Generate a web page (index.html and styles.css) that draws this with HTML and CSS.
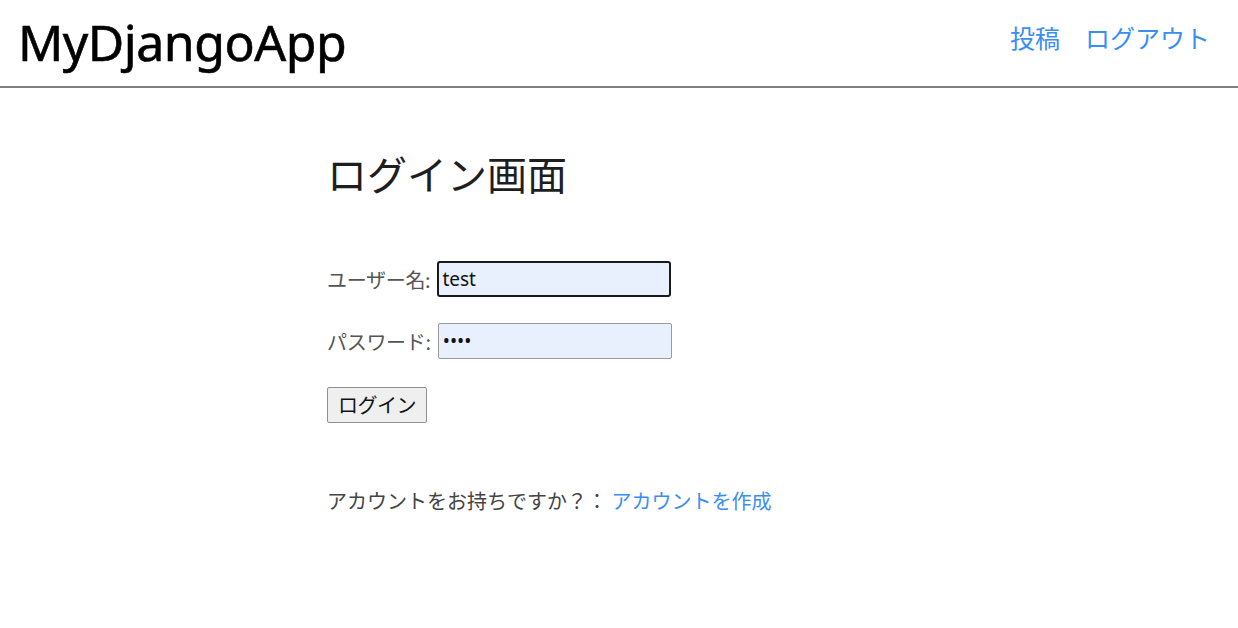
FILE: index.html
```html
<!DOCTYPE html>
<html lang="ja">
<head>
<meta charset="utf-8">
<title>MyDjangoApp</title>
<link rel="stylesheet" href="styles.css">
</head>
<body>
<header class="site-header">
  <a class="brand" href="#">MyDjangoApp</a>
  <nav class="nav">
    <a href="#">投稿</a>
    <a href="#">ログアウト</a>
  </nav>
</header>
<main class="container">
  <h1 class="page-title">ログイン画面</h1>
  <form class="login-form">
    <p class="field"><label for="u">ユーザー名:</label> <input id="u" class="input focused" type="text" value="test"></p>
    <p class="field"><label for="p">パスワード:</label> <input id="p" class="input" type="password" value="test"></p>
    <p class="field"><button type="button" class="btn">ログイン</button></p>
  </form>
  <p class="signup">アカウントをお持ちですか？： <a href="#">アカウントを作成</a></p>
</main>
</body>
</html>
```

FILE: styles.css
```css
html, body {
  margin: 0;
  padding: 0;
  background: #fff;
}
body {
  font-family: "Noto Sans", "Noto Sans CJK JP", sans-serif;
  color: #333;
}
.site-header {
  height: 86px;
  border-bottom: 2px solid #808080;
  display: flex;
  align-items: center;
  justify-content: space-between;
  padding: 0 28px 0 18px;
}
.brand {
  font-family: "Noto Sans", sans-serif;
  font-size: 50px;
  color: #000;
  text-decoration: none;
  line-height: 1;
  letter-spacing: -0.5px;
  -webkit-text-stroke: 0.6px #000;
  margin-top: -2px;
}
.nav {
  display: flex;
  gap: 25px;
  margin-top: -12px;
}
.nav a {
  font-family: "Noto Sans CJK JP", sans-serif;
  font-size: 25px;
  color: #3a8ef2;
  text-decoration: none;
  line-height: 1;
}
.container {
  width: 584px;
  margin: 0 auto;
  padding-top: 61px;
  font-family: "Noto Sans CJK JP", "Noto Sans", sans-serif;
}
.page-title {
  margin: 0;
  font-size: 40px;
  font-weight: 400;
  line-height: 48px;
  color: #1e1e1e;
  letter-spacing: 0;
}
.login-form {
  margin: 64px 0 0;
  display: flex;
  flex-direction: column;
  gap: 26px;
}
.field {
  margin: 0;
  display: flex;
  align-items: center;
  height: 36px;
  font-size: 20px;
  color: #555;
}
.field label {
  margin-right: 7px;
  letter-spacing: -0.3px;
}
.input {
  box-sizing: border-box;
  width: 234px;
  height: 36px;
  margin: 0;
  padding: 0 4px;
  background: #e8f0fe;
  border: 1px solid #9a9a9a;
  border-radius: 2px;
  font-family: "Noto Sans", sans-serif;
  font-size: 19px;
  color: #111;
  outline: none;
}
.input.focused {
  border: 2px solid #1a1a1a;
  border-radius: 3px;
  padding: 0 3px;
}
.field + .field + .field {
  margin-top: 2px;
  height: 35px;
}
.btn {
  box-sizing: border-box;
  height: 36px;
  padding: 0 10px;
  background: #efefef;
  border: 1px solid #8f8f8f;
  border-radius: 2px;
  font-family: "Noto Sans CJK JP", sans-serif;
  font-size: 20px;
  color: #111;
  line-height: 1;
  letter-spacing: -0.5px;
}
.signup {
  margin: 64px 0 0;
  font-size: 20px;
  line-height: 30px;
  color: #444;
  letter-spacing: 0;
}
.signup a {
  color: #3a8ef2;
  text-decoration: none;
}
```
